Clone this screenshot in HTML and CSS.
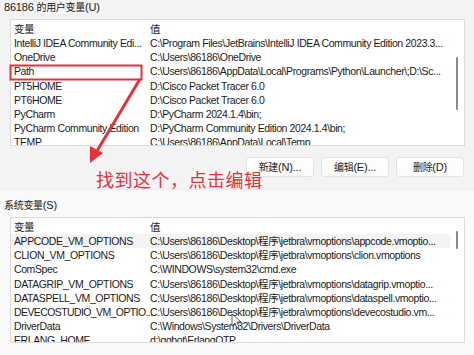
FILE: index.html
```html
<!DOCTYPE html>
<html>
<head>
<meta charset="utf-8">
<link rel="stylesheet" href="styles.css">
</head>
<body>
<div class="upper">
  <div class="title">86186 <span class="cjk">的用户变量</span>(U)</div>
  <div class="list top-list">
    <div class="row head"><span class="c1">变量</span><span class="c2">值</span></div>
    <div class="row"><span class="c1">IntelliJ IDEA Community Edi...</span><span class="c2">C:\Program Files\JetBrains\IntelliJ IDEA Community Edition 2023.3...</span></div>
    <div class="row"><span class="c1">OneDrive</span><span class="c2">C:\Users\86186\OneDrive</span></div>
    <div class="row"><span class="c1">Path</span><span class="c2">C:\Users\86186\AppData\Local\Programs\Python\Launcher\;D:\Sc...</span></div>
    <div class="row"><span class="c1">PT5HOME</span><span class="c2">D:\Cisco Packet Tracer 6.0</span></div>
    <div class="row"><span class="c1">PT6HOME</span><span class="c2">D:\Cisco Packet Tracer 6.0</span></div>
    <div class="row"><span class="c1">PyCharm</span><span class="c2">D:\PyCharm 2024.1.4\bin;</span></div>
    <div class="row"><span class="c1">PyCharm Community Edition</span><span class="c2">D:\PyCharm Community Edition 2024.1.4\bin;</span></div>
    <div class="row"><span class="c1">TEMP</span><span class="c2">C:\Users\86186\AppData\Local\Temp</span></div>
    <div class="scroll top-scroll"></div>
  </div>
  <div class="buttons">
    <div class="btn"><span class="cjk">新建</span>(N)...</div>
    <div class="btn"><span class="cjk">编辑</span>(E)...</div>
    <div class="btn"><span class="cjk">删除</span>(D)</div>
  </div>
</div>
<div class="lower">
  <div class="title"><span class="cjk">系统变量</span>(S)</div>
  <div class="list bottom-list">
    <div class="row head"><span class="c1">变量</span><span class="c2">值</span></div>
    <div class="row hover"><span class="c1">APPCODE_VM_OPTIONS</span><span class="c2">C:\Users\86186\Desktop\程序\jetbra\vmoptions\appcode.vmoptio...</span></div>
    <div class="row"><span class="c1">CLION_VM_OPTIONS</span><span class="c2">C:\Users\86186\Desktop\程序\jetbra\vmoptions\clion.vmoptions</span></div>
    <div class="row"><span class="c1">ComSpec</span><span class="c2">C:\WINDOWS\system32\cmd.exe</span></div>
    <div class="row"><span class="c1">DATAGRIP_VM_OPTIONS</span><span class="c2">C:\Users\86186\Desktop\程序\jetbra\vmoptions\datagrip.vmoptio...</span></div>
    <div class="row"><span class="c1">DATASPELL_VM_OPTIONS</span><span class="c2">C:\Users\86186\Desktop\程序\jetbra\vmoptions\dataspell.vmoptio...</span></div>
    <div class="row"><span class="c1 tight">DEVECOSTUDIO_VM_OPTIO...</span><span class="c2">C:\Users\86186\Desktop\程序\jetbra\vmoptions\devecostudio.vm...</span></div>
    <div class="row"><span class="c1">DriverData</span><span class="c2">C:\Windows\System32\Drivers\DriverData</span></div>
    <div class="row"><span class="c1">ERLANG_HOME</span><span class="c2">d:\qqbot\ErlangOTP</span></div>
    <div class="scroll bottom-scroll"></div>
  </div>
</div>
<svg class="overlay" width="474" height="355" viewBox="0 0 474 355">
  <rect x="10.5" y="65.5" width="131" height="14" fill="none" stroke="#e2323c" stroke-width="2"/>
  <line x1="140" y1="79" x2="97" y2="151" stroke="#e2323c" stroke-width="3"/>
  <polygon points="90,163 90,146 103,153" fill="#e2323c"/>
  <path d="M232 314 L232 326 L235 323 L237 328 L239 327 L237 322 L241 322 Z" fill="#fff" stroke="#333" stroke-width="0.8"/>
</svg>
<div class="note">找到这个，点击编辑</div>
</body>
</html>
```
FILE: styles.css
```css
* { box-sizing: border-box; }
html, body { margin: 0; padding: 0; }
body {
  width: 474px;
  height: 355px;
  overflow: hidden;
  position: relative;
  background: #f9f9f9;
  font-family: "Liberation Sans", "Noto Sans CJK SC", sans-serif;
  font-size: 10.5px;
  letter-spacing: -0.4px;
  color: #1b1b1b;
}
.cjk { font-size: 10px; letter-spacing: -0.3px; }
.upper {
  background: #f3f3f3;
  height: 190px;
  border-bottom: 1px solid #ebebeb;
}
.title {
  height: 19px;
  line-height: 15px;
  padding-left: 4px;
  font-size: 11px;
  letter-spacing: -0.2px;
  color: #1b1b1b;
}
.lower .title {
  height: 26px;
  line-height: 24px;
  padding-top: 2px;
}
.lower { padding-top: 1px; }
.list {
  position: relative;
  margin-left: 10px;
  width: 455px;
  height: 127px;
  background: #fff;
  border: 1px solid #dadada;
  overflow: hidden;
}
.row {
  display: flex;
  height: 14.2px;
  line-height: 15px;
  white-space: nowrap;
}
.row.head {
  height: 16px;
  line-height: 18px;
}
.row.hover { background: #f4f4f4; width: 439px; }
.c1 {
  width: 136px;
  padding-left: 3px;
  overflow: hidden;
  flex: none;
}
.c1.tight { letter-spacing: -0.6px; overflow: visible; }
.c2 {
  width: 304px;
  padding-left: 3px;
  overflow: hidden;
  flex: none;
}
.scroll {
  position: absolute;
  right: 6px;
  width: 2px;
  background: #8a8a8a;
  border-radius: 1px;
}
.top-scroll { top: 37px; height: 53px; }
.bottom-scroll { top: 13px; height: 18px; }
.buttons {
  display: flex;
  justify-content: flex-end;
  gap: 7px;
  padding-right: 10px;
  margin-top: 11px;
}
.btn {
  width: 68px;
  height: 20px;
  line-height: 19px;
  text-align: center;
  background: #fdfdfd;
  border: 1px solid #e3e3e3;
  border-radius: 3px;
  font-size: 11px;
  letter-spacing: -0.2px;
  color: #1b1b1b;
}
.bottom-list { height: 126px; }
.overlay {
  position: absolute;
  left: 0;
  top: 0;
}
.note {
  position: absolute;
  left: 96px;
  top: 166px;
  font-family: "Noto Sans CJK SC", sans-serif;
  font-size: 18px;
  line-height: 26px;
  color: #e2323c;
  letter-spacing: 0.5px;
}
```
